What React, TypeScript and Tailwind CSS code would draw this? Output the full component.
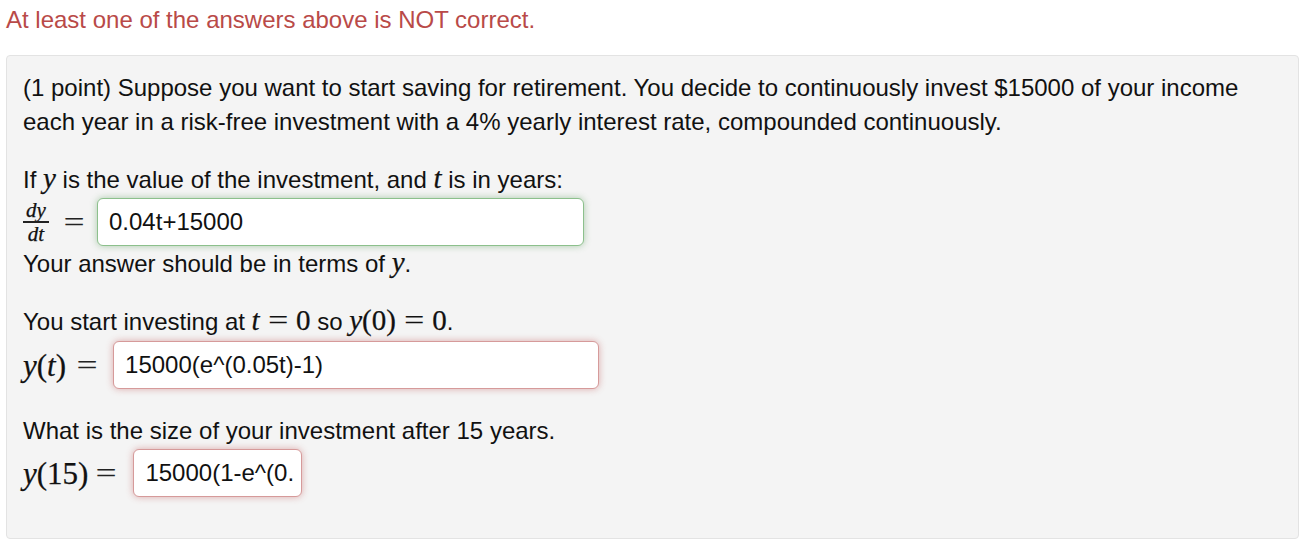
import React from "react";

const serif = "font-['Liberation_Serif','DejaVu_Serif',serif] [-webkit-text-stroke:0.25px_#111]";

const M = ({ children }: { children: React.ReactNode }) => (
    <span className={`${serif} text-[29px] leading-none`}>{children}</span>
);

const I = ({ children }: { children: React.ReactNode }) => <i className="italic">{children}</i>;

const Eq = () => <span className="inline-block mx-[10px] scale-x-125 [-webkit-text-stroke:0px]">=</span>;

const Answer = ({ value, width, tone }: { value: string; width: string; tone: "ok" | "bad" }) => (
    <div
        className={
            tone === "ok"
                ? `${width} h-[48px] shrink-0 flex items-center px-[11px] whitespace-nowrap overflow-hidden bg-white rounded-[6px] border border-[#8cc08c] shadow-[0_0_7px_rgba(80,150,80,0.45)]`
                : `${width} h-[48px] shrink-0 flex items-center px-[11px] whitespace-nowrap overflow-hidden bg-white rounded-[6px] border border-[#d69a9a] shadow-[0_0_7px_rgba(190,80,80,0.45)]`
        }
    >
        {value}
    </div>
);

const EqSign = ({ cls }: { cls: string }) => (
    <span className={`${cls} inline-block shrink-0 text-center font-['Liberation_Serif',serif] text-[30px] leading-none text-[#222] scale-x-125`}>=</span>
);

export default function App() {
    return (
        <div className="min-h-[546px] bg-white text-[24px] text-[#111] font-['Liberation_Sans',Arial,sans-serif]">
            <div className="px-[6px] pt-[6px] h-[41px] leading-[28px] text-[#b94a48]">At least one of the answers above is NOT correct.</div>

            <div className="mx-[6px] mt-[14px] h-[484px] bg-[#f4f4f4] border border-[#e3e3e3] rounded-[4px] px-[16px] pt-[15px]">
                <p className="leading-[34px]">
                    (1 point) Suppose you want to start saving for retirement. You decide to continuously invest $15000 of your income each year in a risk-free
                    investment with a 4% yearly interest rate, compounded continuously.
                </p>

                <p className="mt-[24px] leading-[34px]">
                    If <M><I>y</I></M> is the value of the investment, and <M><I>t</I></M> is in years:
                </p>
                <div className="flex items-center h-[50px]">
                    <span className={`w-[26px] flex flex-col items-center ${serif} italic text-[21px] leading-[20px]`}>
                        <span>dy</span>
                        <span className="w-full h-[2px] my-[1px] bg-[#222]"></span>
                        <span>dt</span>
                    </span>
                    <EqSign cls="w-[24px] ml-[13px] mr-[11px]" />
                    <Answer value="0.04t+15000" width="w-[487px]" tone="ok" />
                </div>
                <p className="leading-[34px]">
                    Your answer should be in terms of <M><I>y</I></M>.
                </p>

                <p className="mt-[24px] leading-[34px]">
                    You start investing at{" "}
                    <M>
                        <I>t</I>
                        <Eq />0
                    </M>{" "}
                    so{" "}
                    <M>
                        <I>y</I>(0)
                        <Eq />0
                    </M>
                    .
                </p>
                <div className="flex items-center h-[52px]">
                    <span className={`${serif} text-[31px] leading-none whitespace-nowrap`}>
                        <I>y</I>(<I>t</I>)
                    </span>
                    <EqSign cls="w-[20px] ml-[11px] mr-[16px]" />
                    <Answer value="15000(e^(0.05t)-1)" width="w-[486px]" tone="bad" />
                </div>

                <p className="mt-[23px] leading-[34px]">What is the size of your investment after 15 years.</p>
                <div className="flex items-center h-[50px]">
                    <span className={`${serif} text-[31px] leading-none whitespace-nowrap`}>
                        <I>y</I>(15)
                    </span>
                    <EqSign cls="w-[20px] ml-[8px] mr-[17px]" />
                    <Answer value="15000(1-e^(0." width="w-[169px]" tone="bad" />
                </div>
            </div>
        </div>
    );
}
